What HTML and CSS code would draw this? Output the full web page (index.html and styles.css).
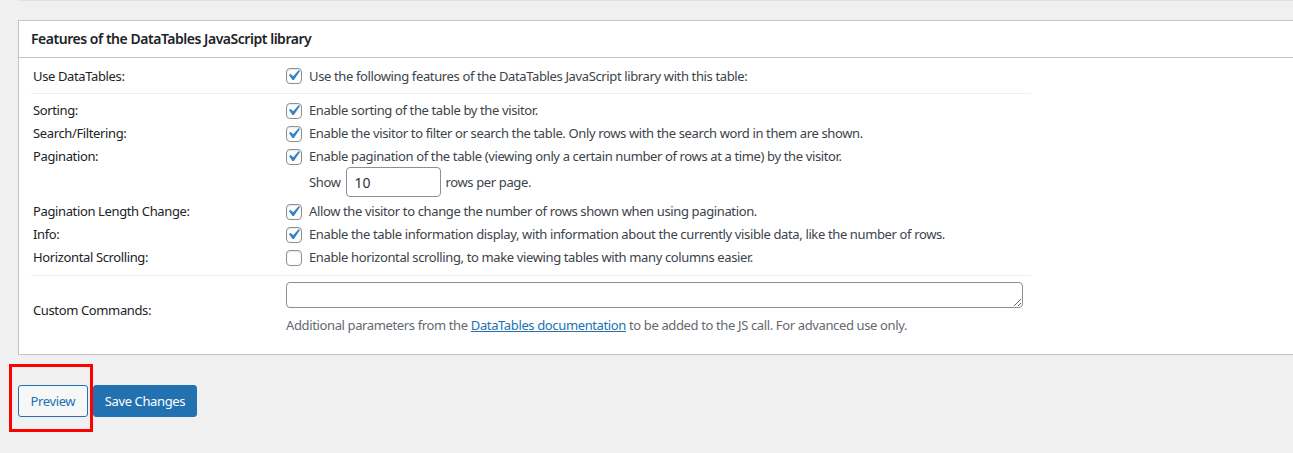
FILE: index.html
```html
<!DOCTYPE html>
<html lang="en">
<head>
  <meta charset="UTF-8" />
  <title>TablePress - Edit Table</title>
  <link rel="stylesheet" href="styles.css">
</head>
<body>
  <div class="prev-box"></div>

  <div class="wrap">
    <div class="postbox">
      <h2 class="hndle">Features of the DataTables JavaScript library</h2>
      <div class="inside">
        <table class="form-table">
          <tbody class="group-top">
            <tr>
              <th>Use DataTables:</th>
              <td><label class="check-row"><span class="cb on"><svg viewBox="0 0 20 20"><path d="M14.83 4.89l1.34.94-5.81 8.38H9.02L5.78 9.67l1.34-1.25 2.57 2.4z"/></svg></span>Use the following features of the DataTables JavaScript library with this table:</label></td>
            </tr>
          </tbody>
          <tbody class="group-features">
            <tr class="first">
              <th>Sorting:</th>
              <td><label class="check-row"><span class="cb on"><svg viewBox="0 0 20 20"><path d="M14.83 4.89l1.34.94-5.81 8.38H9.02L5.78 9.67l1.34-1.25 2.57 2.4z"/></svg></span>Enable sorting of the table by the visitor.</label></td>
            </tr>
            <tr>
              <th>Search/Filtering:</th>
              <td><label class="check-row"><span class="cb on"><svg viewBox="0 0 20 20"><path d="M14.83 4.89l1.34.94-5.81 8.38H9.02L5.78 9.67l1.34-1.25 2.57 2.4z"/></svg></span>Enable the visitor to filter or search the table. Only rows with the search word in them are shown.</label></td>
            </tr>
            <tr>
              <th class="top">Pagination:</th>
              <td>
                <label class="check-row"><span class="cb on"><svg viewBox="0 0 20 20"><path d="M14.83 4.89l1.34.94-5.81 8.38H9.02L5.78 9.67l1.34-1.25 2.57 2.4z"/></svg></span>Enable pagination of the table (viewing only a certain number of rows at a time) by the visitor.</label>
                <div class="show-row">Show <input type="text" class="small-text" value="10"> rows per page.</div>
              </td>
            </tr>
            <tr>
              <th>Pagination Length Change:</th>
              <td><label class="check-row"><span class="cb on"><svg viewBox="0 0 20 20"><path d="M14.83 4.89l1.34.94-5.81 8.38H9.02L5.78 9.67l1.34-1.25 2.57 2.4z"/></svg></span>Allow the visitor to change the number of rows shown when using pagination.</label></td>
            </tr>
            <tr>
              <th>Info:</th>
              <td><label class="check-row"><span class="cb on"><svg viewBox="0 0 20 20"><path d="M14.83 4.89l1.34.94-5.81 8.38H9.02L5.78 9.67l1.34-1.25 2.57 2.4z"/></svg></span>Enable the table information display, with information about the currently visible data, like the number of rows.</label></td>
            </tr>
            <tr class="last">
              <th>Horizontal Scrolling:</th>
              <td><label class="check-row"><span class="cb"></span>Enable horizontal scrolling, to make viewing tables with many columns easier.</label></td>
            </tr>
          </tbody>
          <tbody class="group-custom">
            <tr>
              <th>Custom Commands:</th>
              <td>
                <textarea class="large-text" rows="1"></textarea>
                <p class="description">Additional parameters from the <a href="#">DataTables documentation</a> to be added to the JS call. For advanced use only.</p>
              </td>
            </tr>
          </tbody>
        </table>
      </div>
    </div>

    <p class="submit">
      <button class="button">Preview</button>
      <button class="button button-primary">Save Changes</button>
    </p>
    <div class="highlight"></div>
  </div>
</body>
</html>
```

FILE: styles.css
```css
* {
  box-sizing: border-box;
}

html, body {
  margin: 0;
  height: 100%;
  overflow: hidden;
}

body {
  background: #f0f0f1;
  color: #3c434a;
  font-family: "Noto Sans", "Open Sans", sans-serif;
  font-size: 13px;
  line-height: 1.4;
  letter-spacing: -0.37px;
}

.prev-box {
  height: 1px;
  margin-left: 18px;
  background: #e2e2e4;
}

.wrap {
  position: relative;
  padding-left: 18px;
  padding-top: 19px;
}

/* Postbox */
.postbox {
  width: calc(100% + 40px);
  background: #fff;
  border: 1px solid #c3c4c7;
}

.hndle {
  margin: 0;
  padding: 8px 12px;
  height: 37px;
  font-size: 14px;
  font-weight: 600;
  line-height: 20px;
  letter-spacing: -0.47px;
  color: #1d2327;
  border-bottom: 1px solid #c3c4c7;
}

.inside {
  padding: 0 12px 9px;
}

/* Options table */
.form-table {
  width: 1000px;
  border-collapse: collapse;
}

.form-table th {
  width: 255px;
  padding: 0 0 0 2px;
  text-align: left;
  font-weight: normal;
  color: #1d2327;
  vertical-align: middle;
}

.form-table th.top {
  vertical-align: top;
  line-height: 23px;
}

.form-table td {
  padding: 0;
  vertical-align: middle;
}

.group-top td,
.group-top th {
  height: 34px;
  padding-top: 1px;
}

.group-features,
.group-custom {
  border-top: 1px solid #f0f0f1;
}

.group-features th,
.group-features td {
  line-height: 23px;
}

.group-features tr.first th,
.group-features tr.first td {
  padding-top: 5px;
}

.group-features tr.last th,
.group-features tr.last td {
  padding-bottom: 6px;
}

.check-row {
  display: flex;
  align-items: center;
  gap: 7px;
  height: 23px;
  color: #3c434a;
}

.group-top .check-row {
  height: 34px;
}

.cb {
  flex: none;
  width: 16px;
  height: 16px;
  border: 1px solid #8c8f94;
  border-radius: 4px;
  background: #fff;
  box-shadow: inset 0 1px 2px rgba(0,0,0,0.1);
  position: relative;
}

.cb svg {
  position: absolute;
  left: -4px;
  top: -4px;
  width: 21px;
  height: 21px;
  fill: #3582c4;
}

.show-row {
  display: flex;
  align-items: center;
  gap: 5px;
  height: 30px;
  margin-top: -1px;
  margin-bottom: 3px;
  padding-left: 23px;
}

.small-text {
  width: 95px;
  height: 30px;
  padding: 0 8px;
  border: 1px solid #8c8f94;
  border-radius: 4px;
  font-family: inherit;
  font-size: 14px;
  color: #2c3338;
}

.group-custom th,
.group-custom td {
  height: 69px;
}

.group-custom td {
  padding-top: 6px;
  vertical-align: top;
}

.large-text {
  display: block;
  width: 737px;
  height: 26px;
  min-height: 26px;
  padding: 2px 6px;
  border: 1px solid #8c8f94;
  border-radius: 4px;
  font-family: inherit;
  font-size: 14px;
  resize: vertical;
}

.description {
  margin: 8px 0 0;
  color: #646970;
  line-height: 18px;
}

.description a {
  color: #2271b1;
}

/* Buttons */
.submit {
  display: flex;
  gap: 5px;
  margin: 30px 0 0;
}

.button {
  height: 32px;
  padding: 0 11.5px;
  border: 1px solid #2271b1;
  border-radius: 3px;
  background: #f6f7f7;
  color: #2271b1;
  font-family: inherit;
  font-size: 13px;
  letter-spacing: -0.37px;
  cursor: pointer;
}

.button-primary {
  background: #2271b1;
  color: #fff;
  padding: 0 11px;
}

/* red annotation box */
.highlight {
  position: absolute;
  left: 9px;
  top: 363px;
  width: 84px;
  height: 68px;
  border: 3px solid #ff0000;
}
```
